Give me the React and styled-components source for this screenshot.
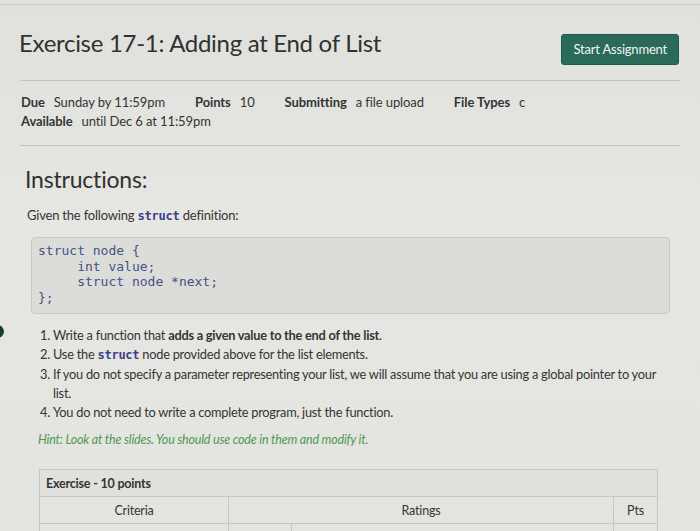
import React from 'react';
import styled, { createGlobalStyle } from 'styled-components';

const Global = createGlobalStyle`
  html, body {
    margin: 0;
    padding: 0;
    background: #e4e4e0;
  }
  body {
    font-family: Lato, "Open Sans", sans-serif;
    color: #333634;
  }
`;

const Page = styled.div`
  position: relative;
  width: 700px;
  height: 531px;
  overflow: hidden;
  background: linear-gradient(180deg, #e0e0dc 0%, #e6e6e2 45%, #e3e3df 100%);
  border-top: 1px solid transparent;
`;

const TopRule = styled.div`
  height: 1px;
  margin: 3px 0 0 0;
  background: #c9c9c5;
`;

const Header = styled.header`
  display: flex;
  align-items: center;
  justify-content: space-between;
  padding: 0 21px 0 19px;
  margin-top: 28px;
  height: 32px;
`;

const Title = styled.h1`
  margin: 0 0 14px 0;
  font-size: 24px;
  font-weight: 400;
  letter-spacing: -0.3px;
  color: #2f3231;
`;

const StartButton = styled.button`
  height: 31px;
  padding: 0 11px;
  border: 1px solid #1f5a4a;
  border-radius: 3px;
  background: #2a6a59;
  color: #f2f5f3;
  font-family: Lato, sans-serif;
  font-size: 13px;
  letter-spacing: -0.2px;
  cursor: pointer;
`;

const Rule = styled.hr`
  margin: ${p => p.$top || 0}px 20px 0 20px;
  border: none;
  border-top: 1px solid #c4c4c0;
`;

const Meta = styled.div`
  padding: 0 21px;
  margin-top: 12px;
  font-size: 13px;
  letter-spacing: -0.1px;
  line-height: 19px;
`;

const MetaRow = styled.div`
  display: flex;
  gap: ${p => p.$gap || 30}px;
`;

const MetaItem = styled.span`
  display: inline-flex;
  gap: 9px;
`;

const Label = styled.b`
  font-weight: 700;
`;

const Content = styled.section`
  padding: 0 20px 0 25px;
`;

const SectionTitle = styled.h2`
  margin: 19px 0 0 0;
  font-size: 23px;
  font-weight: 400;
  letter-spacing: -0.2px;
  color: #2f3231;
`;

const Para = styled.p`
  margin: 14px 0 0 2px;
  font-size: 13px;
  letter-spacing: -0.2px;
`;

const InlineCode = styled.code`
  font-family: "DejaVu Sans Mono", "Liberation Mono", monospace;
  font-weight: 700;
  font-size: 12px;
  color: #3d3f8e;
`;

const CodeBlock = styled.pre`
  margin: 14px 10px 0 6px;
  padding: 5px 6px 8px 6px;
  background: #dcdcd8;
  border: 1px solid #c9c9c5;
  border-radius: 4px;
  font-family: "DejaVu Sans Mono", "Liberation Mono", monospace;
  font-size: 13px;
  line-height: 15.5px;
  color: #44528a;
`;

const Steps = styled.ol`
  margin: 12px 0 0 0;
  padding: 0 16px 0 28px;
  font-size: 12.8px;
  letter-spacing: -0.25px;
  line-height: 19px;
`;

const Hint = styled.p`
  margin: 10px 0 0 13px;
  font-size: 12.5px;
  font-style: italic;
  letter-spacing: -0.2px;
  color: #4f9a55;
`;

const Rubric = styled.table`
  margin: 22px 0 0 14px;
  width: 619px;
  border-collapse: collapse;
  font-size: 12.5px;
  letter-spacing: -0.2px;
  td, th {
    border: 1px solid #c6c6c2;
    height: 26px;
    padding: 0 6px;
  }
`;

const Caption = styled.th`
  text-align: left;
  font-weight: 700;
  background: #e0e0dc;
`;

const HeadCell = styled.th`
  font-weight: 400;
  text-align: center;
  width: ${p => p.$w}px;
`;

const Dot = styled.div`
  position: absolute;
  left: -9px;
  top: 324px;
  width: 13px;
  height: 13px;
  border-radius: 50%;
  background: #1d3a30;
`;

export default function App() {
  return (
    <Page>
      <Global />
      <TopRule />
      <Header>
        <Title>Exercise 17-1: Adding at End of List</Title>
        <StartButton>Start Assignment</StartButton>
      </Header>
      <Rule $top={15} />
      <Meta>
        <MetaRow>
          <MetaItem><Label>Due</Label>Sunday by 11:59pm</MetaItem>
          <MetaItem><Label>Points</Label>10</MetaItem>
          <MetaItem><Label>Submitting</Label>a file upload</MetaItem>
          <MetaItem><Label>File Types</Label>c</MetaItem>
        </MetaRow>
        <MetaRow>
          <MetaItem><Label>Available</Label>until Dec 6 at 11:59pm</MetaItem>
        </MetaRow>
      </Meta>
      <Rule $top={14} />
      <Content>
        <SectionTitle>Instructions:</SectionTitle>
        <Para>
          Given the following <InlineCode>struct</InlineCode> definition:
        </Para>
        <CodeBlock>{`struct node {
     int value;
     struct node *next;
};`}</CodeBlock>
        <Steps>
          <li>Write a function that <b>adds a given value to the end of the list</b>.</li>
          <li>Use the <InlineCode>struct</InlineCode> node provided above for the list elements.</li>
          <li>If you do not specify a parameter representing your list, we will assume that you are using a global pointer to your list.</li>
          <li>You do not need to write a complete program, just the function.</li>
        </Steps>
        <Hint>Hint: Look at the slides. You should use code in them and modify it.</Hint>
        <Rubric>
          <thead>
            <tr><Caption colSpan={4}>Exercise - 10 points</Caption></tr>
            <tr>
              <HeadCell $w={176}>Criteria</HeadCell>
              <HeadCell colSpan={2}>Ratings</HeadCell>
              <HeadCell $w={31}>Pts</HeadCell>
            </tr>
          </thead>
          <tbody>
            <tr><td></td><td style={{ width: 50 }}></td><td></td><td></td></tr>
          </tbody>
        </Rubric>
      </Content>
      <Dot />
    </Page>
  );
}
